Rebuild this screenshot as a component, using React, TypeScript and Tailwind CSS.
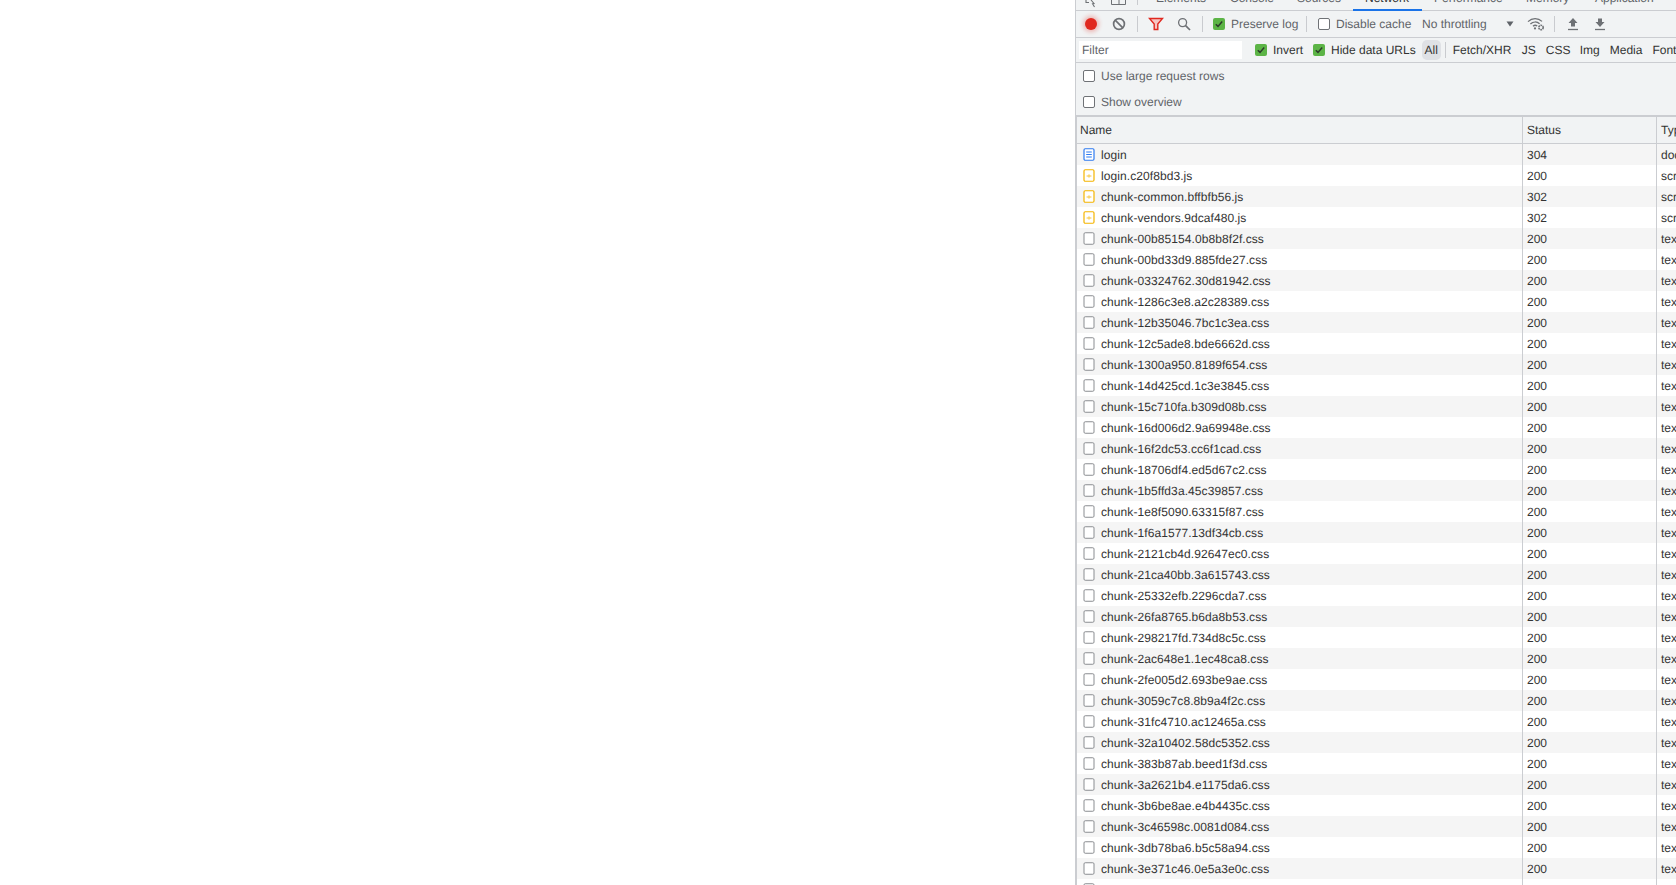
import React from "react";

const names = [
  "chunk-00b85154.0b8b8f2f.css","chunk-00bd33d9.885fde27.css","chunk-03324762.30d81942.css","chunk-1286c3e8.a2c28389.css",
  "chunk-12b35046.7bc1c3ea.css","chunk-12c5ade8.bde6662d.css","chunk-1300a950.8189f654.css","chunk-14d425cd.1c3e3845.css",
  "chunk-15c710fa.b309d08b.css","chunk-16d006d2.9a69948e.css","chunk-16f2dc53.cc6f1cad.css","chunk-18706df4.ed5d67c2.css",
  "chunk-1b5ffd3a.45c39857.css","chunk-1e8f5090.63315f87.css","chunk-1f6a1577.13df34cb.css","chunk-2121cb4d.92647ec0.css",
  "chunk-21ca40bb.3a615743.css","chunk-25332efb.2296cda7.css","chunk-26fa8765.b6da8b53.css","chunk-298217fd.734d8c5c.css",
  "chunk-2ac648e1.1ec48ca8.css","chunk-2fe005d2.693be9ae.css","chunk-3059c7c8.8b9a4f2c.css","chunk-31fc4710.ac12465a.css",
  "chunk-32a10402.58dc5352.css","chunk-383b87ab.beed1f3d.css","chunk-3a2621b4.e1175da6.css","chunk-3b6be8ae.e4b4435c.css",
  "chunk-3c46598c.0081d084.css","chunk-3db78ba6.b5c58a94.css","chunk-3e371c46.0e5a3e0c.css","chunk-3f2a81c0.1d7e4b90.css",
];

type Kind = "doc" | "js" | "css";
type Row = { name: string; status: string; type: string; kind: Kind };
const rows: Row[] = [
  { name: "login", status: "304", type: "document", kind: "doc" },
  { name: "login.c20f8bd3.js", status: "200", type: "script", kind: "js" },
  { name: "chunk-common.bffbfb56.js", status: "302", type: "script", kind: "js" },
  { name: "chunk-vendors.9dcaf480.js", status: "302", type: "script", kind: "js" },
  ...names.map((name) => ({ name, status: "200", type: "text/css", kind: "css" as Kind })),
];

function FileIcon({ kind }: { kind: Kind }) {
  if (kind === "doc")
    return (
      <svg width="12" height="13" viewBox="0 0 12 13" className="shrink-0">
        <rect x="1" y="0.75" width="10" height="11.5" rx="1.2" fill="#fff" stroke="#2f7bf0" strokeWidth="1.2" />
        <path d="M3.2 4h5.6M3.2 6.5h5.6M3.2 9h5.6" stroke="#2f7bf0" strokeWidth="1" />
      </svg>
    );
  if (kind === "js")
    return (
      <svg width="12" height="13" viewBox="0 0 12 13" className="shrink-0">
        <rect x="1" y="0.75" width="10" height="11.5" rx="1.2" fill="#fff" stroke="#f4b400" strokeWidth="1.2" />
        <path d="M3.6 7h.9M7.5 7h.9" stroke="#f4b400" strokeWidth="0.8" />
        <circle cx="6" cy="7" r="1.1" fill="none" stroke="#f4b400" strokeWidth="0.7" />
      </svg>
    );
  return (
    <svg width="12" height="13" viewBox="0 0 12 13" className="shrink-0">
      <rect x="1" y="0.75" width="10" height="11.5" rx="1.2" fill="#fff" stroke="#8a8d91" strokeWidth="1" />
    </svg>
  );
}

function Check({ on, className }: { on?: boolean; className?: string }) {
  return on ? (
    <span className={"flex h-[12px] w-[12px] shrink-0 items-center justify-center rounded-[2px] bg-[#5cb446] " + (className ?? "")}>
      <svg width="10" height="10" viewBox="0 0 10 10">
        <path d="M1.8 5.2 4 7.4 8.2 2.6" fill="none" stroke="#2d3a2b" strokeWidth="1.5" />
      </svg>
    </span>
  ) : (
    <span className={"block h-[12px] w-[12px] shrink-0 rounded-[2px] border border-[#6f7276] bg-white " + (className ?? "")} />
  );
}

const Divider = ({ className }: { className: string }) => (
  <span className={"block h-[16px] w-px shrink-0 bg-[#c9cbcf] " + className} />
);

export default function App() {
  return (
    <div className="flex h-[885px] w-full overflow-hidden bg-white font-['Liberation_Sans',Arial,sans-serif] text-[12px] leading-none [text-rendering:geometricPrecision]">
      <div className="w-[1075px] shrink-0 bg-white" />
      <div className="flex h-full w-[601px] shrink-0 flex-col overflow-hidden border-l border-[#cbcdd1] bg-[#f1f3f4]">
        {/* Tab strip, cut off at the top of the window */}
        <div className="h-[11px] shrink-0 overflow-hidden whitespace-nowrap text-[#5f6368] shadow-[inset_0_-1px_0_#cbcdd1]">
          <div className="flex h-[11px] w-full overflow-hidden">
            <svg width="14" height="10" viewBox="0 0 14 10" className="ml-[9px] shrink-0 text-[#6e7175]">
              <path d="M1 0v2.5h3M6 0l3 3.5-1.5.2L9.5 7" fill="none" stroke="currentColor" strokeWidth="1.1" />
            </svg>
            <svg width="15" height="10" viewBox="0 0 15 10" className="ml-[12px] shrink-0 text-[#6e7175]">
              <path d="M.5 0v4.5h14V0M8 0v4.5" fill="none" stroke="currentColor" strokeWidth="1" />
            </svg>
            <span className="ml-[11px] block h-[5px] w-px self-start bg-[#c9cbcf]" />
            <div className="-mt-[9px] ml-[18px] flex shrink-0 items-start">
              <span className="block w-[49px] leading-[14px]">Elements</span>
              <span className="ml-[25px] block w-[43px] leading-[14px]">Console</span>
              <span className="ml-[24px] block w-[44px] leading-[14px]">Sources</span>
              <span className="ml-[12px] block h-[20px] w-[69px] border-b-[2px] border-[#1a73e8] pl-[12px] leading-[14px] text-[#333]">Network</span>
              <span className="ml-[12px] block w-[68px] leading-[14px]">Performance</span>
              <span className="ml-[24px] block w-[44px] leading-[14px]">Memory</span>
              <span className="ml-[25px] block leading-[14px]">Application</span>
            </div>
          </div>
        </div>

        {/* Toolbar */}
        <div className="flex h-[27px] shrink-0 items-center overflow-hidden border-b border-[#cbcdd1] whitespace-nowrap text-[#5f6368]">
          <span className="ml-[9px] block h-[12px] w-[12px] shrink-0 rounded-full bg-[#e0281f] shadow-[0_0_4px_2px_rgba(224,40,31,0.3)]" />
          <svg width="14" height="14" viewBox="0 0 14 14" className="ml-[15px] shrink-0">
            <circle cx="7" cy="7" r="5.4" fill="none" stroke="#6e7175" strokeWidth="1.7" />
            <path d="M3.2 3.2l7.6 7.6" stroke="#6e7175" strokeWidth="1.7" />
          </svg>
          <Divider className="ml-[11px]" />
          <svg width="16" height="14" viewBox="0 0 16 14" className="ml-[10px] shrink-0">
            <path d="M1.5 1.5h13L9.8 7v5.5H6.2V7z" fill="#f7c5c2" stroke="#e0281f" strokeWidth="1.4" />
          </svg>
          <svg width="14" height="14" viewBox="0 0 14 14" className="ml-[13px] shrink-0">
            <circle cx="5.6" cy="5.6" r="4" fill="none" stroke="#6e7175" strokeWidth="1.3" />
            <path d="M8.6 8.6l4.4 4.4" stroke="#6e7175" strokeWidth="1.7" />
          </svg>
          <Divider className="ml-[11px]" />
          <Check on className="ml-[10px]" />
          <span className="ml-[6px] w-[66px]">Preserve log</span>
          <Divider className="ml-[9px]" />
          <Check className="ml-[11px]" />
          <span className="ml-[6px] w-[75px]">Disable cache</span>
          <span className="ml-[11px] w-[66px]">No throttling</span>
          <svg width="8" height="6" viewBox="0 0 8 6" className="ml-[18px] shrink-0">
            <path d="M0.5 0.5h7L4 5.5z" fill="#5f6368" />
          </svg>
          <svg width="18" height="14" viewBox="0 0 18 14" className="ml-[13px] shrink-0">
            <path d="M1 4.6C5.2 .6 11 .6 15 4.4M3.4 7C6.2 4.4 10 4.4 12.6 6.8M6 9.2c1.3-1.1 3-1.1 4.2-.1" fill="none" stroke="#6e7175" strokeWidth="1.3" />
            <circle cx="8" cy="11.4" r="1.1" fill="#6e7175" />
            <circle cx="14" cy="10.5" r="2.2" fill="none" stroke="#6e7175" strokeWidth="1.6" strokeDasharray="1.6 0.6" />
          </svg>
          <Divider className="ml-[9px]" />
          <svg width="12" height="14" viewBox="0 0 12 14" className="ml-[12px] shrink-0">
            <path d="M6 1 1.5 6H4v3.5h4V6h2.5z" fill="#6e7175" />
            <path d="M1 12.5h10" stroke="#6e7175" strokeWidth="1.3" />
          </svg>
          <svg width="12" height="14" viewBox="0 0 12 14" className="ml-[15px] shrink-0">
            <path d="M6 10 1.5 5H4V1.5h4V5h2.5z" fill="#6e7175" />
            <path d="M1 12.5h10" stroke="#6e7175" strokeWidth="1.3" />
          </svg>
        </div>

        {/* Filter bar */}
        <div className="flex h-[25px] shrink-0 items-center overflow-hidden border-b border-[#cbcdd1] whitespace-nowrap text-[#333]">
          <div className="ml-[3px] flex h-[18px] w-[163px] shrink-0 items-center bg-white pl-[3px] text-[#5f6368]">Filter</div>
          <Check on className="ml-[13px]" />
          <span className="ml-[6px] w-[30px]">Invert</span>
          <Check on className="ml-[10px]" />
          <span className="ml-[6px] w-[85px]">Hide data URLs</span>
          <span className="ml-[6px] flex h-[20px] w-[19px] shrink-0 items-center justify-center rounded-[5px] bg-[#dfe1e5]">All</span>
          <span className="ml-[4px] block h-[16px] w-px shrink-0 bg-[#c9cbcf]" />
          <span className="ml-[7px] w-[58px]">Fetch/XHR</span>
          <span className="ml-[11px] w-[14px]">JS</span>
          <span className="ml-[10px] w-[23px]">CSS</span>
          <span className="ml-[11px] w-[19px]">Img</span>
          <span className="ml-[11px] w-[33px]">Media</span>
          <span className="ml-[10px]">Font</span>
        </div>

        {/* Settings */}
        <div className="flex h-[52px] shrink-0 flex-col text-[#5f6368]">
          <label className="flex h-[26px] items-center pl-[7px]">
            <Check />
            <span className="ml-[6px]">Use large request rows</span>
          </label>
          <label className="flex h-[26px] items-center pl-[7px]">
            <Check />
            <span className="ml-[6px]">Show overview</span>
          </label>
        </div>

        {/* Table */}
        <div className="min-h-0 flex-1 overflow-hidden border-t-2 border-l border-[#cbcdd1] whitespace-nowrap">
          <div className="flex h-[27px] items-center border-b border-[#cbcdd1] text-[#333]">
            <div className="flex h-full w-[445px] shrink-0 items-center pl-[3px]">Name</div>
            <div className="flex h-full w-[134px] shrink-0 items-center border-l border-[#cbcdd1] pl-[4px]">Status</div>
            <div className="flex h-full flex-1 items-center overflow-hidden border-l border-[#cbcdd1] pl-[4px]">Type</div>
          </div>
          {rows.map((r, i) => (
            <div key={r.name} className={"flex h-[21px] items-center text-[#333] " + (i % 2 === 0 ? "bg-[#f5f5f5]" : "bg-white")}>
              <div className="flex h-full w-[445px] shrink-0 items-center pl-[6px]">
                <FileIcon kind={r.kind} />
                <span className="ml-[6px] tracking-[0.08px]">{r.name}</span>
              </div>
              <div className="flex h-full w-[134px] shrink-0 items-center border-l border-[#cbcdd1] pl-[4px]">{r.status}</div>
              <div className="flex h-full min-w-0 flex-1 items-center overflow-hidden border-l border-[#cbcdd1] pl-[4px]">{r.type}</div>
            </div>
          ))}
        </div>
      </div>
    </div>
  );
}
